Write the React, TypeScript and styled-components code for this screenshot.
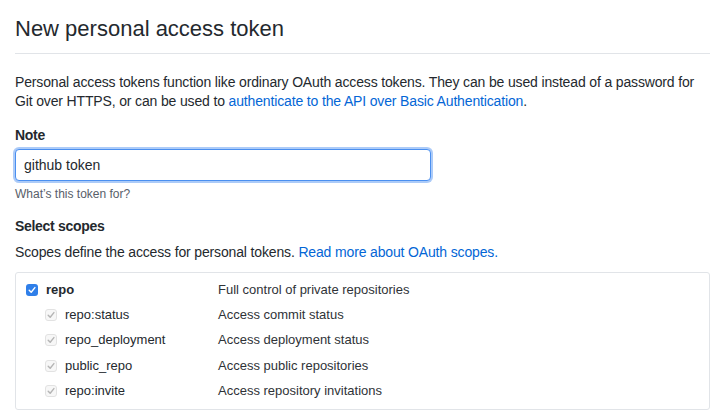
import { FC } from 'react';
import styled, { createGlobalStyle } from 'styled-components';

const GlobalStyle = createGlobalStyle`
	body {
		margin: 0;
		background: #fff;
		color: #24292e;
		font-family: 'Liberation Sans', Arial, sans-serif;
		font-size: 14px;
		line-height: 20px;
	}
`;

type Scope = {
	name: string;
	description: string;
	child?: boolean;
};

const scopes: Scope[] = [
	{ name: 'repo', description: 'Full control of private repositories' },
	{ name: 'repo:status', description: 'Access commit status', child: true },
	{ name: 'repo_deployment', description: 'Access deployment status', child: true },
	{ name: 'public_repo', description: 'Access public repositories', child: true },
	{ name: 'repo:invite', description: 'Access repository invitations', child: true },
];

const CheckMark: FC<{ color: string }> = ({ color }) => (
	<svg width="8" height="8" viewBox="0 0 8 8" fill="none">
		<path d="M1.2 4.2 L3.2 6.2 L6.9 1.6" stroke={color} strokeWidth="1.4" strokeLinecap="round" strokeLinejoin="round" />
	</svg>
);

const App: FC = () => {
	return (
		<>
			<GlobalStyle />
			<Page>
				<Header>
					<Title>New personal access token</Title>
				</Header>
				<Intro>
					Personal access tokens function like ordinary OAuth access tokens. They can be used instead of a
					password for Git over HTTPS, or can be used to{' '}
					<Link href="#">authenticate to the API over Basic Authentication</Link>.
				</Intro>
				<Field>
					<Label>Note</Label>
					<Input defaultValue="github token" />
					<Hint>What’s this token for?</Hint>
				</Field>
				<Label>Select scopes</Label>
				<Description>
					Scopes define the access for personal tokens. <Link href="#">Read more about OAuth scopes.</Link>
				</Description>
				<ScopeBox>
					{scopes.map((scope) => (
						<ScopeRow key={scope.name}>
							<ScopeName child={scope.child}>
								{scope.child ? (
									<DisabledBox>
										<CheckMark color="#b4b4b4" />
									</DisabledBox>
								) : (
									<CheckedBox>
										<CheckMark color="#fff" />
									</CheckedBox>
								)}
								<ScopeLabel child={scope.child}>{scope.name}</ScopeLabel>
							</ScopeName>
							<ScopeDescription>{scope.description}</ScopeDescription>
						</ScopeRow>
					))}
				</ScopeBox>
			</Page>
		</>
	);
};

const Page = styled.div`
	padding: 14px 10px 0 15px;
	letter-spacing: -0.15px;
`;

const Header = styled.div`
	padding-bottom: 9px;
	border-bottom: 1px solid #e1e4e8;
	margin-bottom: 19px;
`;

const Title = styled.h1`
	margin: 0;
	font-size: 22px;
	font-weight: 400;
	line-height: 30px;
	letter-spacing: 0;
`;

const Intro = styled.p`
	margin: 0 0 14px;
	line-height: 19px;
`;

const Link = styled.a`
	color: #0366d6;
	text-decoration: none;
`;

const Field = styled.div`
	margin-bottom: 13px;
`;

const Label = styled.div`
	font-weight: 700;
	margin-bottom: 4px;
	letter-spacing: -0.3px;
`;

const Input = styled.input`
	display: block;
	box-sizing: border-box;
	width: 416px;
	height: 32px;
	padding: 0 8px;
	margin: 0 0 4px;
	font: inherit;
	letter-spacing: 0;
	color: #24292e;
	border: 1px solid #4a8ff0;
	border-radius: 4px;
	box-shadow: 0 0 0 2px rgba(70, 140, 240, 0.45);
	outline: none;
`;

const Hint = styled.div`
	font-size: 12px;
	line-height: 18px;
	letter-spacing: 0;
	color: #586069;
`;

const Description = styled.p`
	margin: 6px 0 10px;
`;

const ScopeBox = styled.div`
	border: 1px solid #e1e4e8;
	border-radius: 3px;
	padding: 4px 10px 5px;
	font-size: 13px;
	letter-spacing: 0;
`;

const ScopeRow = styled.div`
	display: flex;
	align-items: center;
	height: 25.4px;
`;

const ScopeName = styled.div<{ child?: boolean }>`
	display: flex;
	align-items: center;
	width: 192px;
	padding-left: ${(p) => (p.child ? '19px' : '0')};
	box-sizing: border-box;
`;

const BoxBase = styled.span`
	display: inline-flex;
	align-items: center;
	justify-content: center;
	width: 12px;
	height: 12px;
	box-sizing: border-box;
	border-radius: 3px;
	flex-shrink: 0;
`;

const CheckedBox = styled(BoxBase)`
	background: #2f7fe9;
`;

const DisabledBox = styled(BoxBase)`
	background: #f7f7f7;
	border: 1px solid #e2e2e2;
`;

const ScopeLabel = styled.span<{ child?: boolean }>`
	margin-left: 8px;
	font-weight: ${(p) => (p.child ? 400 : 700)};
`;

const ScopeDescription = styled.span`
	color: #2f3337;
`;

export default App;
